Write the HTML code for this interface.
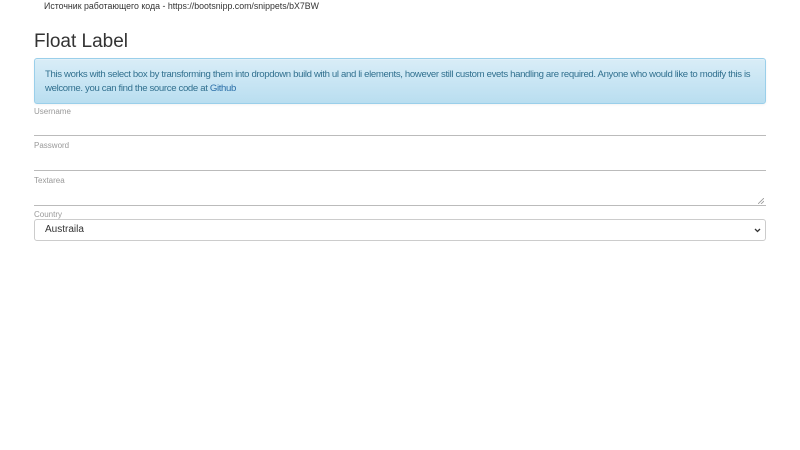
<!DOCTYPE html>
<html><head><meta charset="utf-8"><style>
body{margin:0;background:#fff;font-family:"Liberation Sans","Noto Sans CJK SC",sans-serif;position:relative;width:800px;height:450px;overflow:hidden}
.a{position:absolute}
.src{left:44px;top:0;font-size:8.8px;color:#333;line-height:13px}
h1{position:absolute;left:34px;top:30px;margin:0;font-size:19px;font-weight:400;color:#333;line-height:24px}
.alert{left:34px;top:58px;width:730px;height:44px;border:1px solid #9acfea;border-radius:3px;background:linear-gradient(#d9edf7,#b9def0);box-shadow:inset 0 1px 0 rgba(255,255,255,.25),0 1px 2px rgba(0,0,0,.05)}
.alert p{margin:0;position:absolute;left:10px;top:9px;width:712px;font-size:9.6px;letter-spacing:-0.35px;line-height:14px;color:#31708f}
.alert a{color:#2a6fa8;text-decoration:none}
.lbl{left:34px;font-size:8px;color:#999}
.line{left:34px;width:732px;height:1px;background:#bbb}
.sel{left:34px;top:219px;width:730px;height:20px;border:1px solid #ccc;border-radius:3px;font-size:10px;color:#333}
.sel span{position:absolute;left:10px;top:4px}
</style></head><body>
<div class="a src">Источник работающего кода - https://bootsnipp.com/snippets/bX7BW</div>
<h1>Float Label</h1>
<div class="a alert"><p>This works with select box by transforming them into dropdown build with ul and li elements, however still custom evets handling are required. Anyone who would like to modify this is welcome. you can find the source code at <a>Github</a></p></div>
<div class="a lbl" style="top:107px">Username</div>
<div class="a line" style="top:135px"></div>
<div class="a lbl" style="top:141px">Password</div>
<div class="a line" style="top:170px"></div>
<div class="a lbl" style="top:176px">Textarea</div>
<div class="a line" style="top:205px"></div>
<svg class="a" style="left:758px;top:198px" width="6" height="6"><path d="M0 6L6 0M3 6L6 3" stroke="#999" stroke-width="0.8"/></svg>
<div class="a lbl" style="top:210px">Country</div>
<div class="a sel"><span>Austraila</span>
<svg class="a" style="left:719px;top:8px" width="7" height="5"><path d="M1 1L3.5 3.5L6 1" stroke="#333" stroke-width="1.3" fill="none"/></svg></div>
</body></html>
